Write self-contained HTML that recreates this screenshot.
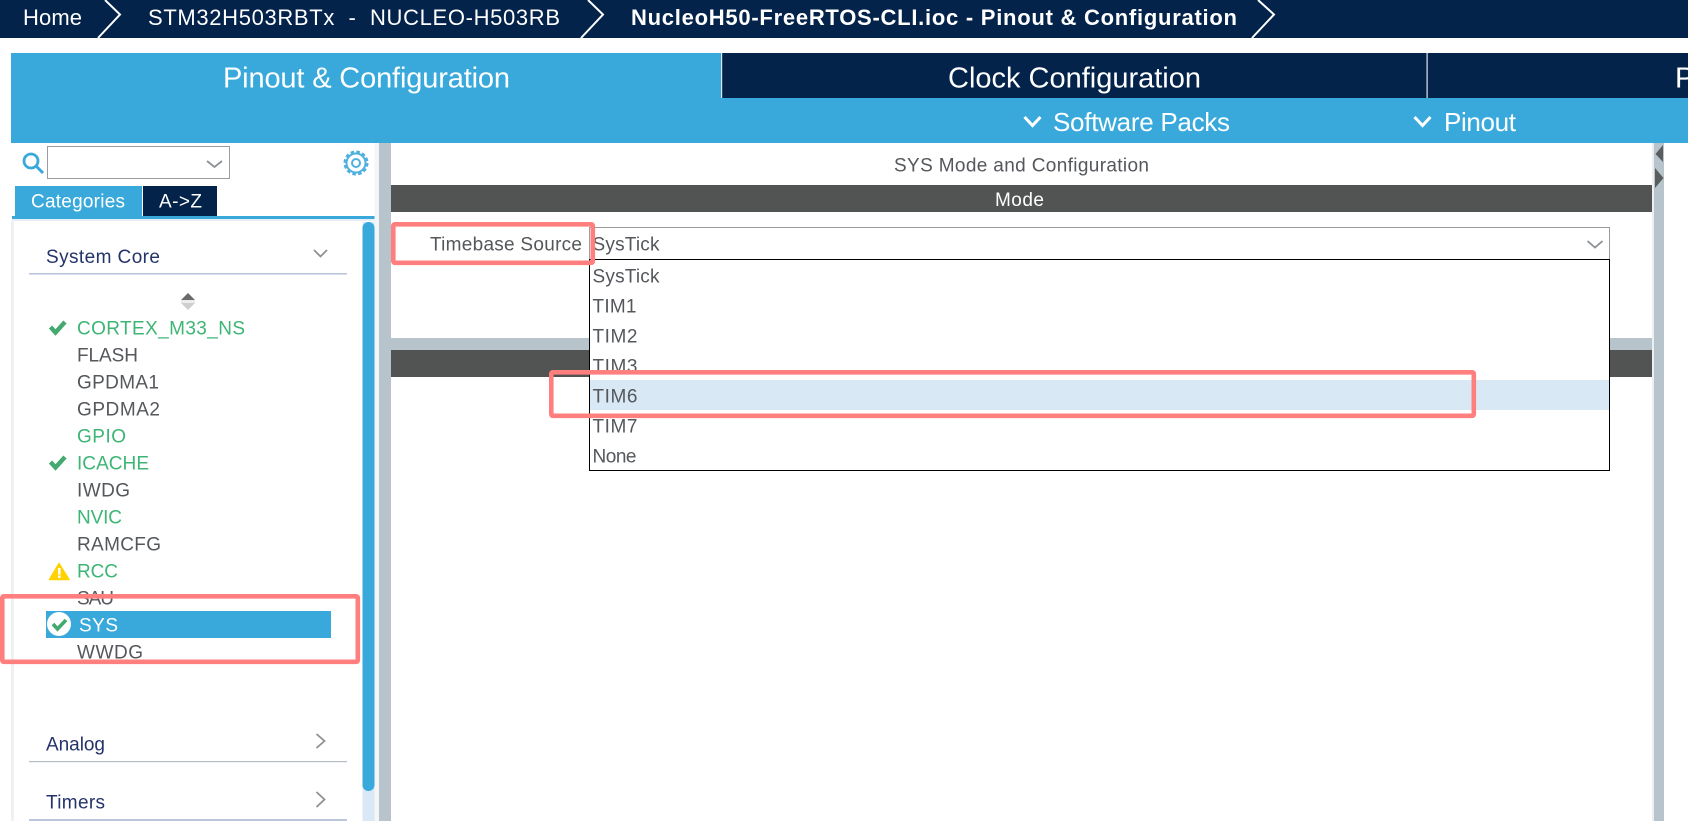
<!DOCTYPE html>
<html lang="en">
<head>
<meta charset="utf-8">
<title>STM32CubeMX - SYS Mode and Configuration</title>
<style>
html,body{margin:0;padding:0;background:#fff;width:1688px;height:821px;overflow:hidden}
svg{display:block}
text{font-family:"Liberation Sans",sans-serif;font-size:19px;fill:#54575b}
.g{fill:#3db575}
.h{fill:#24336a}
.w{fill:#fff}
.nav{font-size:22px;fill:#fff}
.tab{font-size:29px;fill:#fff}
.sub{font-size:26px;fill:#fff}
.chev{fill:none;stroke:#8e9194;stroke-width:1.8}
</style>
</head>
<body>
<svg width="1688" height="821" viewBox="0 0 1688 821" xmlns="http://www.w3.org/2000/svg">
<!-- breadcrumb -->
<rect x="0" y="0" width="1688" height="38" fill="#03234b"/>
<text class="nav" x="23" y="25" textLength="59">Home</text>
<path d="M105 0L120 14.500L98 38" fill="none" stroke="#fff" stroke-width="2"/>
<text class="nav" x="148" y="25" textLength="412" xml:space="preserve">STM32H503RBTx  -  NUCLEO-H503RB</text>
<path d="M588 0L603 14.500L581 38" fill="none" stroke="#fff" stroke-width="2"/>
<text class="nav" x="631" y="25" textLength="606" font-weight="700">NucleoH50-FreeRTOS-CLI.ioc - Pinout &amp; Configuration</text>
<path d="M1258 0L1274 14.500L1252 38" fill="none" stroke="#fff" stroke-width="2"/>

<!-- main tabs -->
<rect x="11" y="53" width="1677" height="45" fill="#03234b"/>
<rect x="11" y="53" width="710" height="45" fill="#39a9dc"/>
<rect x="721" y="53" width="1.200" height="45" fill="#dfe6ec"/>
<rect x="1426.500" y="53" width="1.200" height="45" fill="#dfe6ec"/>
<text class="tab" x="223" y="87.500" textLength="287">Pinout &amp; Configuration</text>
<text class="tab" x="948" y="87.500" textLength="253">Clock Configuration</text>
<text class="tab" x="1675" y="87.500">Pinout</text>

<!-- sub bar -->
<rect x="11" y="98" width="1677" height="45" fill="#39a9dc"/>
<path d="M1024.500 117L1032.500 125.500L1040.500 117" fill="none" stroke="#fff" stroke-width="3"/>
<text class="sub" x="1053" y="131" textLength="177">Software Packs</text>
<path d="M1414.500 117L1422.500 125.500L1430.500 117" fill="none" stroke="#fff" stroke-width="3"/>
<text class="sub" x="1444" y="131" textLength="72">Pinout</text>

<!-- sidebar header -->
<circle cx="31" cy="161" r="7" fill="none" stroke="#39a9dc" stroke-width="2.800"/>
<path d="M36 166L43 173" stroke="#39a9dc" stroke-width="3"/>
<rect x="47.500" y="146.500" width="182" height="32" fill="#fff" stroke="#9a9da0" stroke-width="1"/>
<path d="M207 161L214.500 167L222 161" class="chev"/>
<g fill="none" stroke="#4fb0e0">
  <circle cx="356" cy="163" r="9.500" stroke-width="2"/>
  <circle cx="356" cy="163" r="11" stroke-width="3" stroke-dasharray="3.500 2.260"/>
  <circle cx="356" cy="163" r="4" stroke-width="2"/>
</g>
<rect x="15" y="186" width="127" height="30" fill="#39a9dc"/>
<text class="w" x="31" y="207.500" textLength="94">Categories</text>
<rect x="143" y="186" width="74" height="30" fill="#03234b"/>
<text class="w" x="159" y="207.500" textLength="43">A-&gt;Z</text>
<rect x="12" y="216" width="365" height="3" fill="#39a9dc"/>
<rect x="12" y="219" width="365" height="2" fill="#e6eff6"/>
<rect x="11" y="221" width="3" height="600" fill="#f0f0f0"/>

<!-- sidebar scrollbar & splitter -->
<rect x="362.500" y="222" width="12" height="599" fill="#d9e8f5"/>
<rect x="362.500" y="222" width="12" height="569" rx="6" fill="#39a9dc"/>
<rect x="374.500" y="143" width="4.500" height="678" fill="#f3f5f7"/>
<rect x="379" y="143" width="12" height="678" fill="#b8c4cb"/>

<!-- sidebar tree -->
<text class="h" x="46" y="263" textLength="114">System Core</text>
<path d="M314 250L320.500 256.500L327 250" class="chev"/>
<rect x="29" y="273" width="318" height="1.600" fill="#b9c6dc"/>

<path d="M188 293L195 300H181Z" fill="#6a6a6a"/>
<rect x="181" y="300" width="14" height="3" fill="#ececec"/>
<path d="M181 303H195L188 310Z" fill="#cfcfcf"/>

<path d="M50.500 327L55.500 332.500L65 322" fill="none" stroke="#43a96f" stroke-width="4.400"/>
<g transform="translate(0,-0.600)">
<text class="g" x="77" y="335" textLength="168">CORTEX_M33_NS</text>
<text x="77" y="362" textLength="61">FLASH</text>
<text x="77" y="389" textLength="82">GPDMA1</text>
<text x="77" y="416" textLength="83">GPDMA2</text>
<text class="g" x="77" y="443" textLength="49">GPIO</text>
<text class="g" x="77" y="470" textLength="72">ICACHE</text>
<text x="77" y="497" textLength="53">IWDG</text>
<text class="g" x="77" y="524" textLength="45">NVIC</text>
<text x="77" y="551" textLength="84">RAMCFG</text>
<text class="g" x="77" y="578" textLength="41">RCC</text>
<text x="77" y="605" textLength="37">SAU</text>
</g>
<path d="M50.500 462L55.500 467.500L65 457" fill="none" stroke="#43a96f" stroke-width="4.400"/>
<path d="M59 563.500L69 579.500H49.500Z" fill="#ffd200" stroke="#ffd200" stroke-width="1.500" stroke-linejoin="round"/>
<rect x="58" y="568" width="2.600" height="6.500" fill="#fff"/>
<rect x="58" y="575.500" width="2.600" height="2.500" fill="#fff"/>
<rect x="46" y="611" width="285" height="27" fill="#39a9dc"/>
<circle cx="59" cy="624" r="12" fill="#fff"/>
<path d="M53 624L57.500 629L66 620" fill="none" stroke="#43a96f" stroke-width="3.600"/>
<g transform="translate(0,-0.600)">
<text class="w" x="79" y="632" textLength="39">SYS</text>
<text x="77" y="659" textLength="66">WWDG</text>
<text class="h" x="46" y="751" textLength="59">Analog</text>
<text class="h" x="46" y="809" textLength="59">Timers</text>
</g>
<path d="M316.500 734L324.500 741L316.500 748" class="chev"/>
<rect x="29" y="761" width="318" height="1.200" fill="#b5bcc6"/>
<path d="M316.500 792L324.500 799.500L316.500 807" class="chev"/>
<rect x="29" y="819" width="318" height="2" fill="#b9c6dc"/>

<!-- main panel -->
<text x="894" y="171.500" textLength="255">SYS Mode and Configuration</text>
<rect x="391" y="185" width="1261" height="27" fill="#525453"/>
<text class="w" x="995" y="206" textLength="49">Mode</text>

<rect x="391" y="338" width="1261" height="12" fill="#b8c4cb"/>
<rect x="391" y="350" width="1261" height="27" fill="#525453"/>

<!-- combo -->
<rect x="589.500" y="227.500" width="1020" height="32" fill="#fff" stroke="#9a9da0" stroke-width="1"/>
<text x="430" y="250.500" textLength="152">Timebase Source</text>
<text x="592.500" y="250.500" textLength="67">SysTick</text>
<path d="M1587.500 241L1595 247.500L1602.500 241" class="chev"/>

<!-- dropdown -->
<rect x="589.500" y="259.500" width="1020" height="211" fill="#fff" stroke="#000" stroke-width="1"/>
<rect x="590" y="380" width="1019" height="30" fill="#d9e8f5"/>
<g transform="translate(-0.500,-0.500)">
<text x="593" y="283" textLength="67">SysTick</text>
<text x="593" y="313" textLength="44">TIM1</text>
<text x="593" y="343" textLength="45">TIM2</text>
<text x="593" y="373" textLength="45">TIM3</text>
<text x="593" y="403" textLength="45">TIM6</text>
<text x="593" y="433" textLength="45">TIM7</text>
<text x="593" y="463" textLength="44">None</text>
</g>

<!-- right splitter -->
<rect x="1652" y="143" width="2" height="678" fill="#eceff1"/>
<rect x="1654" y="143" width="10" height="678" fill="#b8c4cb"/>
<path d="M1663 145L1655.500 154L1663 162Z" fill="#5a5c5e"/>
<path d="M1655 168L1663.500 178L1655 188Z" fill="#5a5c5e"/>

<!-- annotations -->
<g fill="none" stroke="#ff7f7f" stroke-width="4.600">
  <rect x="393.300" y="224.300" width="199.500" height="38.500" rx="1.500"/>
  <rect x="551.300" y="372.300" width="922.500" height="43.500" rx="1.500"/>
  <rect x="2.300" y="596.300" width="355.500" height="65.500" rx="1.500"/>
</g>
</svg>
</body>
</html>
